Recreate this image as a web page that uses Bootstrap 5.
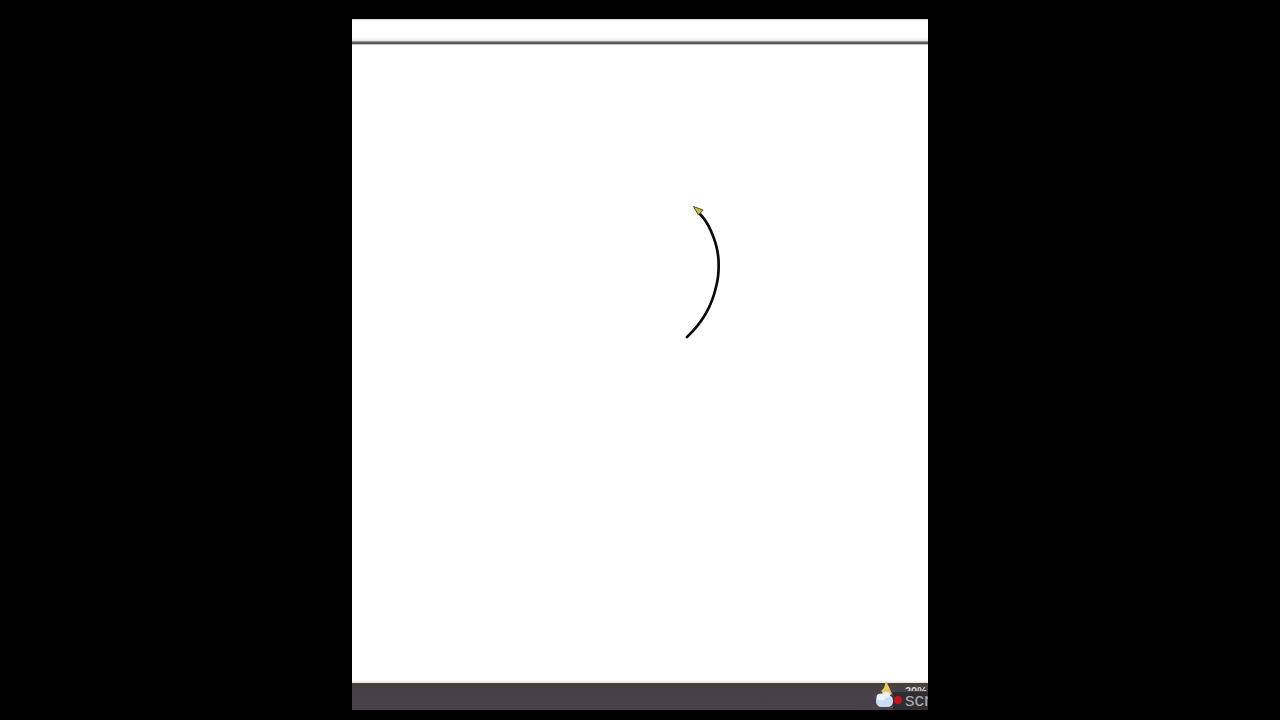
<!DOCTYPE html>
<html lang="en">
<head>
<meta charset="utf-8">
<title>Drawing</title>
<link href="https://cdn.jsdelivr.net/npm/bootstrap@5.3.0/dist/css/bootstrap.min.css" rel="stylesheet">
<style>
html, body { height: 720px; overflow: hidden; background: #000; }
.stage { height: 720px; padding-top: 19px; padding-bottom: 10px; }
.win { width: 576px; background: #fff; overflow: hidden; }
.topbar { height: 26px; background: linear-gradient(#d4d4d4 0, #fff 2px, #fff 18px, #f0f0f0 21px, #dedede 22px, #5a5a5a 23px, #5a5a5a 24.500px, #f4f4f4 26px); }
.paint { position: relative; flex: 1 1 auto; }
.paint svg { position: absolute; left: 0; top: 0; }
.foot-edge { height: 3px; background: linear-gradient(#fff, #e3e3e3); }
.taskbar { position: relative; height: 27px; background: linear-gradient(#4d3f38 0, #46414a 9px, #4b4049 27px); }
.tray { position: absolute; right: 0; top: -4px; height: 31px; width: 56px; overflow: hidden; }
.tray svg { position: absolute; left: 0; top: 0; }
.recbox { position: absolute; left: 21px; top: 13px; width: 35px; height: 18px; background: #312c31; }
.recpct { position: absolute; left: 33px; top: 7px; font: 700 11px/11px "Liberation Sans", sans-serif; color: #d8d8d8; height: 5px; overflow: hidden; white-space: nowrap; }
.recname { position: absolute; left: 33px; top: 12px; font: 400 19px/17px "Liberation Sans", sans-serif; color: #a9abb0; white-space: nowrap; }
.recdot { position: absolute; left: 22px; top: 17px; width: 8px; height: 8px; border-radius: 50%; background: #c8101c; }
</style>
</head>
<body>
<div class="stage d-flex justify-content-center">
  <div class="win d-flex flex-column">
    <div class="topbar flex-shrink-0"></div>
    <div class="paint">
      <svg width="576" height="635" viewBox="352 45 576 635" xmlns="http://www.w3.org/2000/svg">
        <path d="M699 213 C704 218 708 224 711 231 C715 240 718 250 718.500 260 C719 270 718 280 716 287 C712 305 702 323 687 337" fill="none" stroke="#0a0a0a" stroke-width="2.700" stroke-linecap="round"/>
        <path d="M693.500 206.500 L703 210 L698.500 215 Z" fill="#c4c04e" stroke="#4a4a26" stroke-width="1"/>
      </svg>
    </div>
    <div class="foot-edge flex-shrink-0"></div>
    <div class="taskbar flex-shrink-0">
      <div class="tray">
        <svg width="30" height="31" viewBox="0 0 30 31" xmlns="http://www.w3.org/2000/svg">
          <path d="M9 12 L12 9 L14 2 L17 8 L20 15 L14 18 Z" fill="#e9c964"/>
          <rect x="4" y="16" width="17" height="12" rx="5.500" fill="#c9dcf6"/>
          <ellipse cx="9" cy="18" rx="4.500" ry="3.500" fill="#eef4fd"/>
          <ellipse cx="14" cy="16" rx="4" ry="3" fill="#e8f0fb"/>
        </svg>
        <div class="recbox"></div>
        <div class="recpct">20%</div>
        <div class="recname">scr</div>
        <div class="recdot"></div>
      </div>
    </div>
  </div>
</div>
<script src="https://cdn.jsdelivr.net/npm/bootstrap@5.3.0/dist/js/bootstrap.bundle.min.js"></script>
</body>
</html>
